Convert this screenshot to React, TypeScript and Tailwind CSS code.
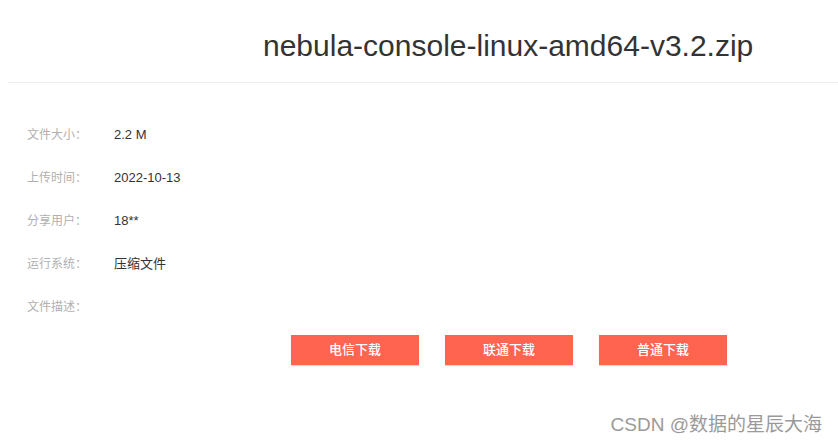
const rows = [
  { label: "文件大小：", value: "2.2 M" },
  { label: "上传时间：", value: "2022-10-13" },
  { label: "分享用户：", value: "18**" },
  { label: "运行系统：", value: "压缩文件" },
  { label: "文件描述：", value: "" },
];

const buttons = ["电信下载", "联通下载", "普通下载"];

export default function App() {
  return (
    <div className="relative w-[838px] h-[446px] bg-white overflow-hidden font-['Liberation_Sans','Noto_Sans_CJK_SC',sans-serif]">
      {/* Header */}
      <div className="ml-[8px] h-[83px] border-b border-[#eeeeee] pl-[255px] pt-[31px]">
        <h1 className="text-[30px] leading-[30px] text-[#333333] whitespace-nowrap">
          nebula-console-linux-amd64-v3.2.zip
        </h1>
      </div>

      {/* Info rows */}
      <div className="mt-[30px] pl-[27px]">
        {rows.map((row) => (
          <div key={row.label} className="flex items-center h-[43px]">
            <span className="w-[87px] text-[12px] text-[#b0b0b0]">{row.label}</span>
            <span className="text-[13px] text-[#333333]">{row.value}</span>
          </div>
        ))}
      </div>

      {/* Download buttons */}
      <div className="mt-[7px] pl-[291px] flex gap-[26px]">
        {buttons.map((b) => (
          <button
            key={b}
            className="w-[128px] h-[30px] bg-[#ff6450] text-white text-[13px] font-medium shadow-[0_1px_1px_rgba(0,0,0,0.15)]"
          >
            {b}
          </button>
        ))}
      </div>

      {/* Watermark */}
      <div className="absolute right-[16px] top-[413px] text-[19px] leading-[24px] text-[#9a9a9a] whitespace-nowrap [text-shadow:0_0_1px_#ffffff]">
        CSDN @数据的星辰大海
      </div>
    </div>
  );
}
